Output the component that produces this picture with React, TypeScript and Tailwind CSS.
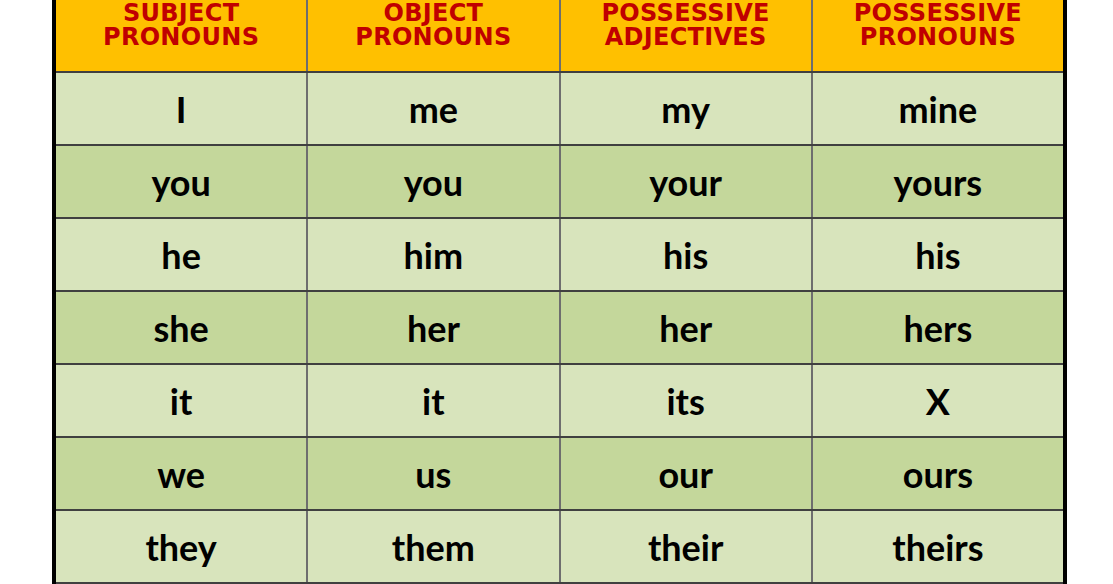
const headers = [
  ['SUBJECT', 'PRONOUNS'],
  ['OBJECT', 'PRONOUNS'],
  ['POSSESSIVE', 'ADJECTIVES'],
  ['POSSESSIVE', 'PRONOUNS'],
];

const rows = [
  ['I', 'me', 'my', 'mine'],
  ['you', 'you', 'your', 'yours'],
  ['he', 'him', 'his', 'his'],
  ['she', 'her', 'her', 'hers'],
  ['it', 'it', 'its', 'X'],
  ['we', 'us', 'our', 'ours'],
  ['they', 'them', 'their', 'theirs'],
];

export default function App() {
  return (
    <div className="w-[1113px] h-[584px] overflow-hidden bg-white">
      <div className="ml-[52px] w-[1015px] border-x-4 border-black">
        <div className="flex h-[73px] border-b-2 border-[#404040] bg-[#ffc000]">
          {headers.map((h, i) => (
            <div
              key={i}
              className={`flex-1 flex flex-col items-center pt-[1px] text-[24px] leading-[24px] font-bold tracking-[0.3px] text-[#c00000] ${
                i < 3 ? 'border-r-2 border-[#6e6e6e]' : ''
              }`}
              style={{ fontFamily: '"DejaVu Sans", Verdana, sans-serif' }}
            >
              <span>{h[0]}</span>
              <span>{h[1]}</span>
            </div>
          ))}
        </div>
        {rows.map((row, r) => (
          <div
            key={r}
            className={`flex h-[73px] border-b-2 border-[#404040] ${
              r % 2 === 0 ? 'bg-[#d8e4bc]' : 'bg-[#c4d79b]'
            }`}
          >
            {row.map((word, i) => (
              <div
                key={i}
                className={`flex-1 flex items-center justify-center text-[36px] font-bold text-black ${
                  i < 3 ? 'border-r-2 border-[#6e6e6e]' : ''
                }`}
                style={{ fontFamily: 'Lato, "Open Sans", sans-serif' }}
              >
                {word}
              </div>
            ))}
          </div>
        ))}
      </div>
    </div>
  );
}
